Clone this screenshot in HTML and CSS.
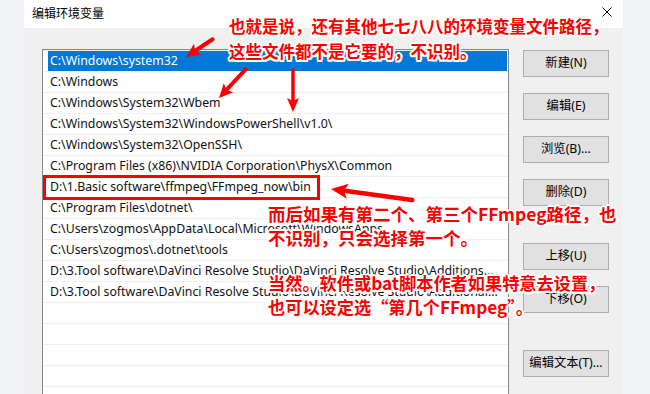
FILE: index.html
```html
<!DOCTYPE html>
<html lang="zh-CN">
<head>
<meta charset="utf-8">
<title>编辑环境变量</title>
<link rel="stylesheet" href="styles.css">
</head>
<body>
<div class="dialog">
  <div class="titlebar">
    <span class="title">编辑环境变量</span>
    <svg class="close" width="10" height="10" viewBox="0 0 10 10"><path d="M0.5 0.5 L9.5 9.5 M9.5 0.5 L0.5 9.5" stroke="#000" stroke-width="1" fill="none"/></svg>
  </div>
  <div class="content">
    <div class="list">
      <div class="row sel"><span class="cell">C:\Windows\system32</span></div>
      <div class="row"><span class="cell">C:\Windows</span></div>
      <div class="row"><span class="cell">C:\Windows\System32\Wbem</span></div>
      <div class="row"><span class="cell">C:\Windows\System32\WindowsPowerShell\v1.0\</span></div>
      <div class="row"><span class="cell">C:\Windows\System32\OpenSSH\</span></div>
      <div class="row"><span class="cell">C:\Program Files (x86)\NVIDIA Corporation\PhysX\Common</span></div>
      <div class="row"><span class="cell">D:\1.Basic software\ffmpeg\FFmpeg_now\bin</span></div>
      <div class="row"><span class="cell">C:\Program Files\dotnet\</span></div>
      <div class="row"><span class="cell">C:\Users\zogmos\AppData\Local\Microsoft\WindowsApps</span></div>
      <div class="row"><span class="cell">C:\Users\zogmos\.dotnet\tools</span></div>
      <div class="row"><span class="cell">D:\3.Tool software\DaVinci Resolve Studio\DaVinci Resolve Studio\Additions...</span></div>
      <div class="row"><span class="cell">D:\3.Tool software\DaVinci Resolve Studio\DaVinci Resolve Studio\Additional...</span></div>
      <div class="row"><span class="cell"></span></div>
      <div class="row"><span class="cell"></span></div>
      <div class="row"><span class="cell"></span></div>
      <div class="row"><span class="cell"></span></div>
      <div class="row"><span class="cell"></span></div>
    </div>
    <div class="buttons">
      <button class="btn">新建(N)</button>
      <button class="btn">编辑(E)</button>
      <button class="btn">浏览(B)...</button>
      <button class="btn">删除(D)</button>
      <button class="btn group">上移(U)</button>
      <button class="btn">下移(O)</button>
      <button class="btn group">编辑文本(T)...</button>
    </div>
  </div>
</div>

<div class="mark"></div>

<svg class="arrows" width="650" height="394" viewBox="0 0 650 394">
  <g fill="#fa0000" stroke="#fa0000">
    <g transform="translate(186 57) rotate(146.3)">
      <line x1="-32" y1="0" x2="-9" y2="0" stroke-width="4" stroke-linecap="round"/>
      <polygon points="0,0 -14,-6.5 -11,0 -14,6.5" stroke="none"/>
    </g>
    <g transform="translate(219 98) rotate(132.95)">
      <line x1="-39" y1="0" x2="-9" y2="0" stroke-width="4" stroke-linecap="round"/>
      <polygon points="0,0 -14,-6.5 -11,0 -14,6.5" stroke="none"/>
    </g>
    <g transform="translate(293 112) rotate(90)">
      <line x1="-42" y1="0" x2="-9" y2="0" stroke-width="3.5" stroke-linecap="round"/>
      <polygon points="0,0 -14,-6 -11,0 -14,6" stroke="none"/>
    </g>
    <g transform="translate(331 189) rotate(-172.36)">
      <line x1="-82" y1="0" x2="-10" y2="0" stroke-width="4.5" stroke-linecap="round"/>
      <polygon points="0,0 -17,-7.5 -13,0 -17,7.5" stroke="none"/>
    </g>
  </g>
</svg>

<div class="note note-top">也就是说，还有其他七七八八的环境变量文件路径，<br>这些文件都不是它要的，不识别。</div>
<div class="note note-mid">而后如果有第二个、第三个FFmpeg路径，也<br>不识别，只会选择第一个。</div>
<div class="note note-bot">当然。软件或bat脚本作者如果特意去设置，<br>也可以设定选“第几个FFmpeg”。</div>
</body>
</html>
```

FILE: styles.css
```css
html, body {
  margin: 0;
  padding: 0;
  width: 650px;
  height: 394px;
  overflow: hidden;
  background: #f3f4f8;
}

body {
  position: relative;
  font-family: "Noto Sans", "Noto Sans CJK SC", sans-serif;
}

.dialog {
  margin-left: 24px;
  width: 599px;
  height: 394px;
  background: #f0f0f0;
  display: flex;
  flex-direction: column;
}

.titlebar {
  height: 28px;
  flex: none;
  background: #fff;
  display: flex;
  align-items: center;
  justify-content: space-between;
  padding: 0 11px 3px 8px;
  box-sizing: border-box;
}

.title {
  font-family: "Noto Sans CJK SC", sans-serif;
  font-size: 12px;
  color: #000;
}

.close {
  display: block;
  margin-top: -1px;
}

.content {
  display: flex;
  align-items: flex-start;
  padding: 21px 0 0 18px;
  gap: 14px;
}

.list {
  width: 467px;
  height: 420px;
  box-sizing: border-box;
  border: 1px solid #828790;
  background: #fff;
  flex: none;
}

.row {
  height: 21px;
  box-sizing: border-box;
  border-top: 1px solid #f0f0f0;
  display: flex;
}

.cell {
  flex: 1;
  min-width: 0;
  margin: 0 1px 0 5px;
  padding-left: 2px;
  font-family: "Noto Sans", "Noto Sans CJK SC", sans-serif;
  font-size: 12.3px;
  line-height: 20px;
  color: #111;
  white-space: nowrap;
  overflow: hidden;
  text-overflow: ellipsis;
}

.row.sel .cell {
  background: #0078d7;
  color: #fff;
}

.buttons {
  display: flex;
  flex-direction: column;
  gap: 16px;
  padding-top: 1px;
}

.btn {
  width: 86px;
  height: 27px;
  margin: 0;
  padding: 0 0 2px;
  box-sizing: border-box;
  background: #e1e1e1;
  border: 1px solid #adadad;
  border-radius: 0;
  font-family: "Noto Sans", "Noto Sans CJK SC", sans-serif;
  font-size: 12.3px;
  line-height: 16px;
  color: #000;
}

.btn.group {
  margin-top: 21px;
}

.mark {
  position: absolute;
  left: 43px;
  top: 175px;
  width: 277px;
  height: 25px;
  box-sizing: border-box;
  border: 3px solid #fa0000;
}

.arrows {
  position: absolute;
  left: 0;
  top: 0;
  pointer-events: none;
}

.note {
  position: absolute;
  font-family: "Noto Sans CJK SC", sans-serif;
  font-weight: 700;
  color: #fa0000;
  white-space: nowrap;
  text-shadow:
    2px 0 0 #fff, -2px 0 0 #fff, 0 2px 0 #fff, 0 -2px 0 #fff,
    1.5px 1.5px 0 #fff, -1.5px 1.5px 0 #fff, 1.5px -1.5px 0 #fff, -1.5px -1.5px 0 #fff,
    0 0 3px #fff;
}

.note-top {
  left: 229px;
  top: 14px;
  font-size: 16.5px;
  line-height: 25px;
}

.note-mid {
  left: 268px;
  top: 202px;
  font-size: 17.5px;
  line-height: 24px;
}

.note-bot {
  left: 268px;
  top: 271px;
  font-size: 17.2px;
  line-height: 24px;
}
```
